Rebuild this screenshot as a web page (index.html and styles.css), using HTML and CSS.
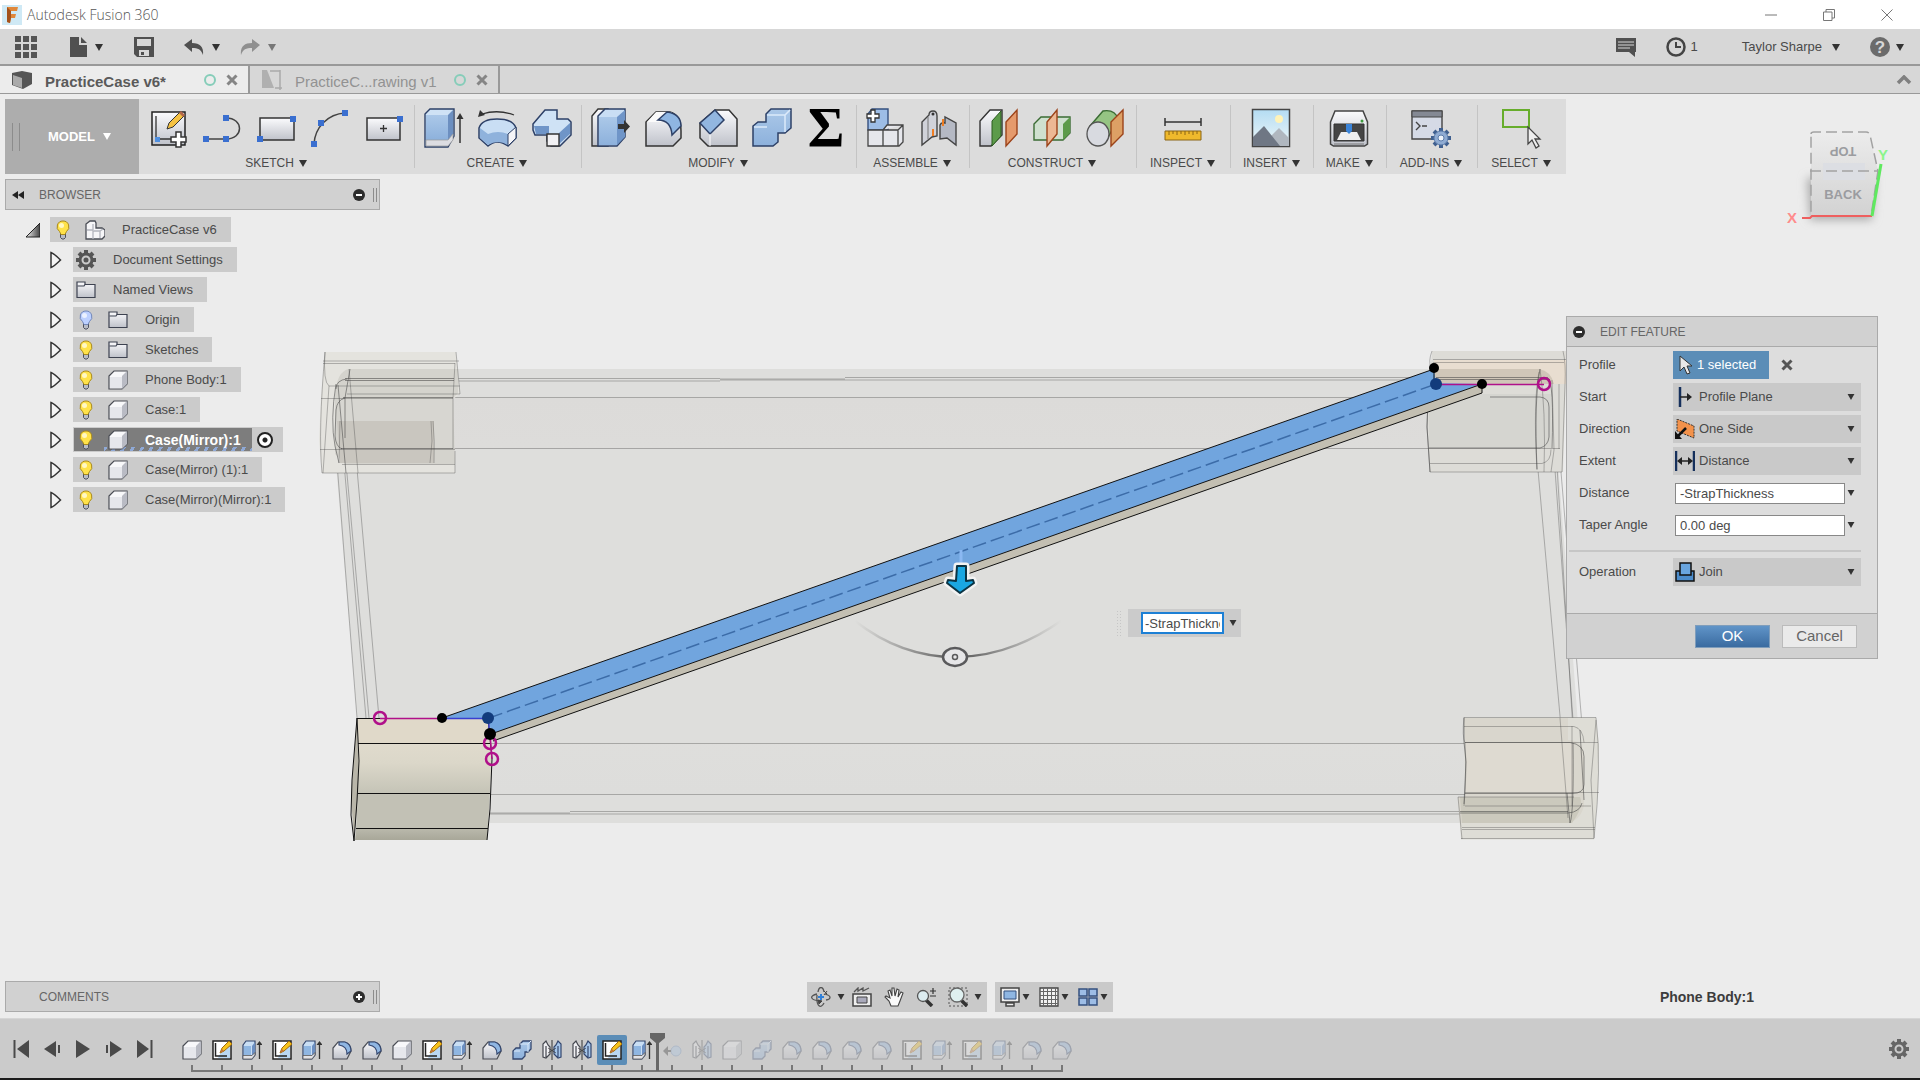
FILE: index.html
```html
<!DOCTYPE html>
<html lang="en">
<head>
    <meta charset="UTF-8">
    <meta name="viewport" content="width=device-width, initial-scale=1.0">
    <title>Autodesk Fusion 360</title>
    <link rel="stylesheet" href="styles.css">
</head>
<body>
    <!-- Shared icons -->
    <svg class="defs" width="0" height="0" aria-hidden="true">
        <defs>
            <linearGradient id="blue" x1="0" y1="0" x2="0" y2="1"><stop offset="0" stop-color="#abc8e8"/><stop offset="1" stop-color="#8db1dc"/></linearGradient>
            <linearGradient id="grey" x1="0" y1="0" x2="0" y2="1"><stop offset="0" stop-color="#fbfbfd"/><stop offset="1" stop-color="#bfc2ca"/></linearGradient>
            <linearGradient id="sky" x1="0" y1="0" x2="0" y2="1"><stop offset="0" stop-color="#b4dcf3"/><stop offset="1" stop-color="#eef7f8"/></linearGradient>
            <linearGradient id="dark" x1="0" y1="0" x2="1" y2="0"><stop offset="0" stop-color="#eee"/><stop offset="1" stop-color="#444"/></linearGradient>
        </defs>

        <symbol id="caret" viewBox="0 0 8 7"><path d="M0 0h8L4 7z" fill="currentColor"/></symbol>
        <symbol id="cross" viewBox="0 0 12 12"><path d="M1.500 1.500l9 9M10.500 1.500l-9 9" stroke="currentColor" stroke-width="3"/></symbol>
        <symbol id="minus" viewBox="0 0 12 12"><circle cx="6" cy="6" r="6" fill="#2d2d2d"/><path d="M3 6h6" stroke="#fff" stroke-width="2"/></symbol>
        <symbol id="plus" viewBox="0 0 12 12"><circle cx="6" cy="6" r="6" fill="#2d2d2d"/><path d="M3 6h6M6 3v6" stroke="#fff" stroke-width="2"/></symbol>
        <symbol id="gear" viewBox="0 0 20 20">
            <circle cx="10" cy="10" r="6" fill="none" stroke="currentColor" stroke-width="3"/>
            <circle cx="10" cy="10" r="2.500" fill="currentColor"/>
            <path d="M10 0v4M10 16v4M0 10h4M16 10h4M3 3l3 3M14 14l3 3M17 3l-3 3M6 14l-3 3" stroke="currentColor" stroke-width="4"/>
        </symbol>
        <symbol id="expand" viewBox="0 0 14 18"><path d="M2 1.500c3 1 7 5 9.500 7.500C9 11.500 5 15.500 2 16.500z" fill="#f4f4f4" stroke="#333" stroke-width="1.500"/></symbol>

        <symbol id="bulb" viewBox="0 0 20 20">
            <path d="M7.500 13h5v4.500l-1.500 1.500h-2L7.500 17.500z" fill="#b8bcc6" stroke="#4b4f5c"/>
            <path d="M10 1a5.800 5.800 0 0 0-3.500 10.500l1.500 3h4l1.500-3A5.800 5.800 0 0 0 10 1z" fill="#ffe24a" stroke="#a88a1e"/>
            <circle cx="8.500" cy="5.500" r="2.500" fill="#fff8c4"/>
        </symbol>
        <symbol id="bulb-off" viewBox="0 0 20 20">
            <path d="M7.500 13h5v4.500l-1.500 1.500h-2L7.500 17.500z" fill="#b8bcc6" stroke="#4b4f5c"/>
            <path d="M10 1a5.800 5.800 0 0 0-3.500 10.500l1.500 3h4l1.500-3A5.800 5.800 0 0 0 10 1z" fill="#bcd0ff" stroke="#7287b8"/>
            <circle cx="8.500" cy="5.500" r="2.500" fill="#eaf1ff"/>
        </symbol>
        <symbol id="folder" viewBox="0 0 20 20">
            <path d="M1 17.500V2h8v2.500h10v13z" fill="url(#grey)" stroke="#3d4250" stroke-width="1.200"/>
            <path d="M1.500 6H8l1-1.500" fill="none" stroke="#3d4250" stroke-width="1.200"/>
        </symbol>
        <symbol id="box" viewBox="0 0 20 20">
            <path d="M1 6l5-5h13v13l-5 5H1z" fill="#f8f8fa" stroke="#4a4d55" stroke-width="1.200"/>
            <path d="M14 6l5-5v13l-5 5z" fill="#b9bbc4"/>
            <path d="M2 7h12v11H2z" fill="#e6e7ec"/>
        </symbol>
        <symbol id="component" viewBox="0 0 20 20">
            <path d="M1 19V4l4-3h5l1 2v5h6l3 2v6l-3 3z" fill="#f6f6f8" stroke="#4a4d55" stroke-width="1.300"/>
            <path d="M8 4v6M8 19v-8h7l3-2M15 11v7M2 10h6" fill="none" stroke="#b3b5bd" stroke-width="1.300"/>
        </symbol>

        <symbol id="t-sketch" viewBox="0 0 20 20">
            <path d="M1 1h18v18H1z" fill="#fff" stroke="#222" stroke-width="1.500"/>
            <path d="M10 10l8-6v14H6z" fill="#b9d6f2"/>
            <path d="M3.500 3v13H15" fill="none" stroke="#222" stroke-width="1.500"/>
            <path d="M8 13l2-5 7-7 3 3-8 7z" fill="#f6c21b" stroke="#a06b0a"/>
            <path d="M8 13l2-4 2 2z" fill="#c2703c"/>
        </symbol>
        <symbol id="t-extrude" viewBox="0 0 20 20">
            <path d="M1 5l3-4h9v14l-3 4H1z" fill="#c9def4" stroke="#33466e" stroke-width="1.200"/>
            <path d="M2 6h7v9H2z" fill="#8fb6e2"/><path d="M10 6l3-4v13l-3 4z" fill="#6b8fc2"/>
            <path d="M1 15.500h9l3-3V15l-3 4H1z" fill="#e2e2e6" stroke="#555" stroke-width=".8"/>
            <path d="M17.500 19V4" stroke="#333" stroke-width="1.300"/><path d="M14.500 5l3-4 3 4z" fill="#333"/>
        </symbol>
        <symbol id="t-fillet" viewBox="0 0 20 20">
            <path d="M1 19V8l5-6h6q7 1 7 9l-4 8z" fill="url(#grey)" stroke="#4a4d55" stroke-width="1.200"/>
            <path d="M7 2h6q6 2 6 9l-4 3q0-8-8-9z" fill="#8fb6e2" stroke="#33466e" stroke-width="1.200"/>
        </symbol>
        <symbol id="t-combine" viewBox="0 0 20 20">
            <path d="M1 19v-8l3-3h4V4l3-3h8v8l-3 3h-3v4l-3 3z" fill="url(#blue)" stroke="#33466e" stroke-width="1.300"/>
            <path d="M8 4h8l3-3M16 4v8M2 11h6" fill="none" stroke="#dceafa"/>
        </symbol>
        <symbol id="t-mirror" viewBox="0 0 20 20">
            <path d="M1 17V4l3-3 2 4 2 2v7l-4 4zM4 6v11" fill="#f0f0f3" stroke="#44474f" stroke-width="1.200"/>
            <path d="M19 17V4l-3-3-2 4-2 2v7l4 4zM16 6v11" fill="#a5c6ea" stroke="#33466e" stroke-width="1.200"/>
            <path d="M10 0v20" stroke="#333"/><path d="M6 8l8 5M14 8l-8 5" stroke="#333" stroke-width=".7"/>
        </symbol>
        <symbol id="t-move" viewBox="0 0 20 20">
            <circle cx="14" cy="11" r="5" fill="#a5c6ea" stroke="#6e8fbd"/><path d="M9 11H4" stroke="#222" stroke-width="2"/><path d="M6 6L1 11l5 5z" fill="#222"/>
        </symbol>
    </svg>

    <header>
        <div class="titlebar">
            <svg class="app-logo" viewBox="0 0 20 20"><path d="M0 0h20v20H0z" fill="#cfe9f5"/><path d="M5 2h11l-1 4H9v3h5l-1 4H9l-1 5-3-1z" fill="#e0873a"/><path d="M5 2l4 4v7l-1 5-3-1z" fill="#a4521c"/></svg>
            <span class="app-name">Autodesk Fusion 360</span>
            <button class="window-btn" aria-label="Minimize"><svg viewBox="0 0 12 12"><path d="M0 6h12" /></svg></button>
            <button class="window-btn" aria-label="Restore"><svg viewBox="0 0 12 12"><path d="M.5 3h8.500v8.500H.5zM3 3V.5h8.500V9H9"/></svg></button>
            <button class="window-btn" aria-label="Close"><svg viewBox="0 0 12 12"><path d="M.5.5l11 11M11.500.5l-11 11"/></svg></button>
        </div>

        <div class="appbar">
            <button class="app-btn" aria-label="Data panel"><svg class="i22" viewBox="0 0 22 22"><path d="M0 0h6v6H0zM8 0h6v6H8zM16 0h6v6h-6zM0 8h6v6H0zM8 8h6v6H8zM16 8h6v6h-6zM0 16h6v6H0zM8 16h6v6H8zM16 16h6v6h-6z" fill="#555"/></svg></button>
            <button class="app-btn file" aria-label="File"><svg class="doc" viewBox="0 0 17 20"><path d="M0 0h9v8h8v12H0zM11 0l6 6h-6z" fill="#505050"/></svg><svg class="caret"><use href="#caret"/></svg></button>
            <button class="app-btn save" aria-label="Save"><svg class="i20" viewBox="0 0 20 20"><path d="M0 0h20v20H3l-3-3z" fill="#505050"/><path d="M3 2h14v7H3zM5 13h10v6H5z" fill="#d7d7d7"/><path d="M7 15h3v3H7z" fill="#505050"/></svg></button>
            <button class="app-btn undo" aria-label="Undo"><svg class="i20" viewBox="0 0 20 16"><path d="M0 6l8-6v4c8 0 12 4 11 12-2-6-5-7-11-7v4z" fill="#505050"/></svg><svg class="caret"><use href="#caret"/></svg></button>
            <button class="app-btn redo" aria-label="Redo"><svg class="i20" viewBox="0 0 20 16"><path d="M20 6l-8-6v4C4 4 0 8 1 16c2-6 5-7 11-7v4z" fill="#8f8f8f"/></svg><svg class="caret"><use href="#caret"/></svg></button>
            <div class="account">
                <button class="app-btn" aria-label="Comments"><svg class="i20" viewBox="0 0 20 20"><path d="M0 1h20v14h-1v5l-6-5H0z" fill="#505050"/><path d="M2 5h16M2 8h16M2 11h12" stroke="#d7d7d7"/></svg></button>
                <button class="app-btn jobs"><svg class="i20" viewBox="0 0 20 20"><circle cx="10" cy="10" r="8.500" fill="none" stroke="#444" stroke-width="2.500"/><path d="M10 5v5h5" fill="none" stroke="#444" stroke-width="2"/></svg>1</button>
                <button class="app-btn user">Taylor Sharpe<svg class="caret"><use href="#caret"/></svg></button>
                <button class="app-btn help" aria-label="Help"><svg class="i20" viewBox="0 0 20 20"><circle cx="10" cy="10" r="10" fill="#6b6b6b"/><text x="10" y="16" text-anchor="middle" class="help-mark">?</text></svg><svg class="caret"><use href="#caret"/></svg></button>
            </div>
        </div>

        <nav class="tabs">
            <div class="tab active">
                <svg class="i20" viewBox="0 0 20 20"><path d="M0 3l10-2 10 2v11l-9 5-11-4z" fill="#555"/><path d="M1 5l9 3v10l-9-3z" fill="#aaa"/></svg>
                <a href="#">PracticeCase v6*</a>
                <span class="status"></span>
                <button class="close" aria-label="Close PracticeCase"><svg><use href="#cross"/></svg></button>
            </div>
            <div class="tab">
                <svg class="i20" viewBox="0 0 20 20"><path d="M0 0h5l7 18H0z" fill="#b0b0b0"/><path d="M8 1h10M18 0v20M13 18h7" fill="none" stroke="#aaa" stroke-width="1.500"/></svg>
                <a href="#">PracticeC...rawing v1</a>
                <span class="status"></span>
                <button class="close" aria-label="Close drawing"><svg><use href="#cross"/></svg></button>
            </div>
            <button class="collapse" aria-label="Collapse"><svg viewBox="0 0 16 10"><path d="M2 8l6-6 6 6" fill="none" stroke="#808080" stroke-width="3.500"/></svg></button>
        </nav>
    </header>

    <main class="workspace">
        <!-- 3D model -->
        <svg class="scene" viewBox="0 94 1920 924" preserveAspectRatio="xMidYMid slice" aria-label="Model view">
            <defs>
                <linearGradient id="clamp" x1="0" y1="0" x2="0" y2="1"><stop offset="0" stop-color="#e0dbcd"/><stop offset=".4" stop-color="#dbd7c9"/><stop offset="1" stop-color="#c5c4b7"/></linearGradient>
                <linearGradient id="clamp-end" x1="0" y1="0" x2="0" y2="1"><stop offset="0" stop-color="#bbbaad"/><stop offset="1" stop-color="#a8a799"/></linearGradient>
                <linearGradient id="fade" x1="0" y1="0" x2="1" y2="0"><stop offset="0" stop-color="#666" stop-opacity="0"/><stop offset=".5" stop-color="#555"/><stop offset="1" stop-color="#666" stop-opacity="0"/></linearGradient>
                <linearGradient id="rail" x1="0" y1="0" x2="0" y2="1"><stop offset="0" stop-color="#dcdbd9"/><stop offset=".6" stop-color="#e1e0de"/><stop offset="1" stop-color="#dddddb"/></linearGradient>
            </defs>
            <!-- phone body -->
            <path d="M346 369H1540q10 2 12 14l32 420q-2 18-12 20H490V718H357L334 440V392q3-20 12-23z" fill="#dededc"/>
            <path d="M340 398H1550v51H340zM490 743H1588v51H490z" fill="url(#rail)"/>
            <g class="edge">
                <path d="M348 378.500H720M348 381H720M720 379H845M845 377.500H1430M720 380H1430M343 397.500H1550M340 448.500H1550M490 743.500H1598M490 794.500H1470M490 813H570M570 811.500H1570M490 814H1570"/>
                <path d="M337 463l20 255M344 463l22 255M346 463l23 255M349 369l8 100 22 249M337 463q-4-40-2-70M1538 470l29 324 3 28M1550 400l23 320M1553 400l23 380M1561 472l22 265 2 60"/>
            </g>
            <!-- top left clamp -->
            <path d="M325 352h131l4 42-7 5 2 74H322l-3-33 2-42z" fill="#e4e3de"/>
            <path d="M349 369h109v24l-5 5 2 66H346l-11-10V395q2-24 14-26z" fill="#cfcec8" opacity=".8"/>
            <path d="M340 398h113v51H340z" fill="#d7d6d1"/>
            <path d="M337 421h97v42H340z" fill="#c9c6bf"/>
            <g class="edge">
                <path d="M325 352q-7 80-3 121h133v-22M325 352q-2 30 4 34l-6 87M456 352l4 42M323 361h136M323 363.500h132M329 386h131M321 398.500h132M320 449.500h135M342 464.500h113M455 363l-2 35v51M347 394h113M431 421l1 20-2 22M433 421q2 20 1 42M340 421l-1 42M349 369l9 104"/>
            </g>
            <g class="edge strong">
                <path d="M345 378.500h109M345 380.500h109M343 397.500h110M341 448.500h112M350 369l-5 29v40M336 384q-6 36-1 62l4 17M347 379q-11 1-11 10M345 398q-8 2-9 12l-1 26q1 11 7 13M338 385l8 88"/>
            </g>
            <!-- top right clamp -->
            <path d="M1432 351h134v28l-3 93h-133l-3-62z" fill="#dddcd7"/>
            <path d="M1434 360h132v24H1436z" fill="#e8ddd0"/>
            <path d="M1434 369h105q12 2 15 15H1436z" fill="#d0c6b8"/>
            <path d="M1429 394h122v54H1429z" fill="#d5d5d0"/>
            <g class="edge">
                <path d="M1432 351q-4 10-1 18M1563 351q3 12 2 33l-3 88M1433 359.500h133M1433 362.500h131M1428 397l-1 30 3 45h132M1429 448.500h131M1430 463.500h112q9-2 9-14M1559 384v65M1540 369q6 40 4 103M1539 372q-6 30-2 98M1552 380l2 70-3 22"/>
            </g>
            <g class="edge strong"><path d="M1436 377.500h112M1436 379.500h114M1490 397h50q9 1 9 10v30q-1 9-9 11H1429M1548 378q6 4 4 70M1428 398l-1 29 3 45M1540 369q-6 30-3 100"/></g>
            <!-- bottom right clamp -->
            <path d="M1464 717.500h132l3 28-1 48-4 46H1461l-3-42h7z" fill="#deddd6"/>
            <path d="M1464 718h104v22q15 0 16 15v50q-3 16-18 18h-106l-2-26h7l1-40z" fill="#d9d6cd"/>
            <path d="M1466 742h107v50h-107z" fill="#dedad1"/>
            <path d="M1460 797h120q4 10-8 26h-110z" fill="#cbc9bd"/>
            <g class="edge">
                <path d="M1464 717.500h132q6 50-2 121H1461M1464 717q-2 20 1 26 2 30-1 63M1464 726.500h110q9 2 10 16M1465 742.500h133M1465 792.500h134M1458 797h116M1458 797l4 42M1465 806h126M1462 827.500h133M1462 829.500h133M1596 720l-5 60 3 58M1572 726v80M1560 718l8 100"/>
            </g>
            <g class="edge strong"><path d="M1465 742.500h105q14 2 14 14v28q0 9-12 9h-107M1460 811.500h108M1460 813h108q12-1 14-10M1567 793l3 30q4-10 3-80M1580 730l4 70M1464 718v24l2 20-2 42"/></g>

            <!-- active clamp -->
            <path d="M357 718l-6 78 3 45 5-55z" fill="#b9b6a9"/>
            <path d="M357 718h131l2 25H358z" fill="#e0d9c9"/>
            <path d="M358 743h133v20l-1 30H358z" fill="url(#clamp)"/>
            <path d="M358 793h132l-2 35H356z" fill="#c2c1b5"/>
            <path d="M356 828h132l-1 12H355z" fill="url(#clamp-end)"/>
            <path class="line" d="M357 718.500h131M358 743.500h132M358 793.500h132M356 828.500h132M357 718l-5 62-1 35 3 26 3-40 2-40-2-43M488 718l4 41-2 50-3 31"/>

            <!-- strap -->
            <path d="M491 734L1482 384v9L493 741z" fill="#c3bfb2"/>
            <path d="M442 718L1434 369l2 14 46 1L491 734l-2-16z" fill="#71a5de"/>
            <path class="line" d="M442 718L1434 369v15M491 734L1482 384v9L493 741"/>
            <path d="M489 718L1436 384" stroke="#3c6ca8" stroke-width="1.500" stroke-dasharray="14 5"/>
            <path d="M961 550v16" stroke="#8bb8f2" stroke-width="3"/>
            <path d="M380 718.500h62M1436 384.500h108M490 734l2 25" stroke="#b0108a" stroke-width="1.500"/>
            <path d="M442 718.500h47v16" fill="none" stroke="#3a3fd0" stroke-width="1.500"/>
            <g fill="none" stroke="#b0108a" stroke-width="2.500"><circle cx="380" cy="718" r="6"/><circle cx="490" cy="743" r="6"/><circle cx="492" cy="759" r="6"/><circle cx="1544" cy="384" r="6"/></g>
            <circle cx="442" cy="718" r="5"/><circle cx="490" cy="734" r="6"/><circle cx="1434" cy="368" r="5"/><circle cx="1482" cy="384" r="5"/>
            <g fill="#123b7c"><circle cx="488" cy="718" r="6"/><circle cx="1436" cy="384" r="6"/></g>

            <!-- manipulator -->
            <path d="M855 621q46 36 100 36t106-36" fill="none" stroke="url(#fade)" stroke-width="2.500"/>
            <ellipse cx="955" cy="657" rx="12" ry="9" fill="#e6e6e8" stroke="#5a5a5c" stroke-width="2.500"/>
            <circle cx="955" cy="657" r="2.500" fill="none" stroke="#5a5a5c" stroke-width="1.500"/>
            <path d="M957 566h9v15l7-1 1 3-14 10-13-10 1-3 8 1z" fill="#1aa7e2" stroke="#f2f2f2" stroke-width="7" stroke-linejoin="round"/>
            <path d="M957 566h9v15l7-1 1 3-14 10-13-10 1-3 8 1z" fill="#1aa7e2" stroke="#0b3444" stroke-width="2" stroke-linejoin="round"/>
        </svg>

        <!-- View cube -->
        <svg class="viewcube" viewBox="1780 120 110 110" aria-label="View cube">
            <defs>
                <filter id="soft" x="-50%" y="-50%" width="200%" height="200%"><feGaussianBlur stdDeviation="5"/></filter>
                <linearGradient id="cube" x1="0" y1="0" x2="0" y2="1"><stop offset="0" stop-color="#ececec"/><stop offset="1" stop-color="#d2d2d2"/></linearGradient>
            </defs>
            <path d="M1807 178h68l-3 42h-62z" fill="#aaa" filter="url(#soft)"/>
            <path d="M1811 132h58l9 39-7 45h-60z" fill="url(#cube)"/>
            <path d="M1823 163h42v17h-42z" fill="#dcdee3"/>
            <path d="M1811 134q0-2 3-2h52q3 0 4 3l8 36-7 45h-60zM1810 171h68" fill="none" stroke="#a2a2a2" stroke-width="1.500" stroke-dasharray="11 5"/>
            <path d="M1802 218h8l2-2h60" fill="none" stroke="#ee5f5f" stroke-width="2"/>
            <path d="M1872 216l9-52" stroke="#5fe95f" stroke-width="3"/>
            <text x="1843" y="199" class="face">BACK</text>
            <text x="1843" y="155" class="face top" transform="rotate(180 1843 151)">TOP</text>
            <text x="1792" y="223" class="axis x">X</text>
            <text x="1883" y="160" class="axis y">Y</text>
        </svg>

        <div class="ribbon">
            <button class="mode">MODEL<svg class="caret"><use href="#caret"/></svg></button>
            <section class="group">
                <div class="tools">
                    <button aria-label="Create sketch"><svg viewBox="0 0 40 40"><path d="M4 4h33v33H4z" fill="url(#grey)" stroke="#222" stroke-width="1.500"/><path d="M8 8v23h23" fill="none" stroke="#333" stroke-width="1.300"/><path d="M7 29h5v5H7z" fill="#4f8fe0"/><path d="M19 21l2-6L32 4l4 4-11 11z" fill="#f5c242" stroke="#333"/><path d="M31 5l2-2 4 4-2 2z" fill="#b4684a"/><path d="M28 24h5v5h5v5h-5v5h-5v-5h-5v-5h5z" fill="#fff" stroke="#333" stroke-width="1.500"/></svg></button>
                    <button aria-label="Line"><svg viewBox="0 0 40 40"><path d="M4 31h20c18 0 18-21 0-21" fill="none" stroke="#444" stroke-width="1.500"/><path d="M1 28h6v6H1zM21 28h6v6h-6zM21 7h6v6h-6z" fill="#3a6fd0"/></svg></button>
                    <button aria-label="Rectangle"><svg viewBox="0 0 40 40"><path d="M4 10h34v22H4z" fill="url(#grey)" stroke="#333" stroke-width="1.500"/><path d="M1 28h6v6H1zM34 8h6v6h-6z" fill="#3a6fd0"/></svg></button>
                    <button aria-label="Arc"><svg viewBox="0 0 40 40"><path d="M4 36C5 19 18 6 35 5" fill="none" stroke="#444" stroke-width="1.500"/><path d="M1 33h6v6H1zM8 12h6v6H8zM32 2h6v6h-6z" fill="#3a6fd0"/></svg></button>
                    <button aria-label="Center rectangle"><svg viewBox="0 0 40 40"><path d="M3 10h33v22H3z" fill="url(#grey)" stroke="#333" stroke-width="1.500"/><path d="M19.500 17v7M16 20.500h7" stroke="#333" stroke-width="1.300"/><path d="M33 8h6v6h-6z" fill="#3a6fd0"/></svg></button>
                </div>
                <button class="label">SKETCH<svg class="caret"><use href="#caret"/></svg></button>
            </section>
            <section class="group">
                <div class="tools">
                    <button aria-label="Extrude"><svg viewBox="0 0 40 40"><path d="M2 6l5-5h24v27l-6 11H2z" fill="#cfe2f5" stroke="#2d4067" stroke-width="1.400"/><path d="M3 7h22v25H3z" fill="url(#blue)"/><path d="M25 7l5-5v24l-5 7z" fill="#6c8fc0"/><path d="M3 32h22l5-6v6l-5 6H3z" fill="#dcdde2" stroke="#999" stroke-width=".7"/><path d="M37 35V8" stroke="#333" stroke-width="1.500"/><path d="M33.500 11L37 5l3.500 6z" fill="#333"/></svg></button>
                    <button aria-label="Revolve"><svg viewBox="0 0 40 40"><path d="M2 20q3-9 18-9 16 0 19 9v10l-8 8q-11-8-20 0l-9-8z" fill="#c9def4" stroke="#2d4067" stroke-width="1.500"/><path d="M3 20l8 6q10-4 20 0v11q-10-6-20 0l-8-7z" fill="#8fb2dc"/><path d="M31 26l8-7v11l-8 8z" fill="#f5f5f8" stroke="#2d4067"/><path d="M5 6q16-5 32 1" fill="none" stroke="#333" stroke-width="1.300"/><path d="M1 9l2-7 5 5z" fill="#333"/></svg></button>
                    <button aria-label="Sweep"><svg viewBox="0 0 40 40"><path d="M2 16L14 2h12v9h11l3 3v13L29 38h-9l-4-5v-6H4l-2-5z" fill="#cfe2f5" stroke="#2d4067" stroke-width="1.500"/><path d="M3 18h15v8H5zM28 25l11-10v11L28 36z" fill="#6f95c8"/><path d="M16 26h12v12H16z" fill="#f1f1f4" stroke="#333" stroke-width="1.400"/></svg></button>
                </div>
                <button class="label">CREATE<svg class="caret"><use href="#caret"/></svg></button>
            </section>
            <section class="group">
                <div class="tools">
                    <button aria-label="Press pull"><svg viewBox="0 0 40 40"><path d="M2 38V8l6-7h10v37z" fill="url(#grey)" stroke="#333" stroke-width="1.400"/><path d="M8 38V8l7-7h20v28l-8 9z" fill="#c9def4" stroke="#2d4067" stroke-width="1.500"/><path d="M9 9h18v28H9z" fill="url(#blue)"/><path d="M27 9l8-7v27l-8 8z" fill="#6f95c8"/><path d="M28 16h6v-4l6 6.500-6 6.500v-4h-6z" fill="#333"/></svg></button>
                    <button aria-label="Fillet"><svg viewBox="0 0 40 40"><path d="M2 38V14L12 4h14q11 3 11 19v7l-8 8z" fill="url(#grey)" stroke="#333" stroke-width="1.500"/><path d="M3 14h15L28 4H12z" fill="#fbfbfb"/><path d="M14 12l9-8q14 2 14 14l-9 9q-1-15-14-15z" fill="#8fb6e2" stroke="#2d4067" stroke-width="1.500"/></svg></button>
                    <button aria-label="Chamfer"><svg viewBox="0 0 40 40"><path d="M2 15L17 2h14l8 9v27H10l-8-8z" fill="url(#grey)" stroke="#333" stroke-width="1.500"/><path d="M17 2l9 10-14 14-10-11z" fill="#92b6e0" stroke="#2d4067" stroke-width="1.500"/><path d="M12 26v12" stroke="#fff"/></svg></button>
                    <button aria-label="Combine"><svg viewBox="0 0 40 40"><path d="M1 38V18l5-4h8V6l5-5h20v19l-6 5h-7v9l-5 4z" fill="url(#blue)" stroke="#2d4067" stroke-width="1.500"/><path d="M15 7h18l5-5M33 7v17M2 19h13" fill="none" stroke="#dceafa" stroke-width="1.500"/></svg></button>
                    <button aria-label="Change parameters"><svg viewBox="0 0 40 40"><text x="20" y="39" text-anchor="middle" class="sigma">&Sigma;</text></svg></button>
                </div>
                <button class="label">MODIFY<svg class="caret"><use href="#caret"/></svg></button>
            </section>
            <section class="group">
                <div class="tools">
                    <button aria-label="New component"><svg viewBox="0 0 40 40"><path d="M3 6l4-5h16v21H3z" fill="#9dbde6" stroke="#35507f" stroke-width="1.400"/><path d="M3 22h15l4-5h16v17l-4 4H3zM18 22v16M18 22h15l5-5M33 22v16" fill="#e6e7ec" stroke="#444" stroke-width="1.300"/><path d="M6 2h4v4h4v4h-4v4H6v-4H2V6h4z" fill="#fff" stroke="#333" stroke-width="1.300"/></svg></button>
                    <button aria-label="Joint"><svg viewBox="0 0 40 40"><path d="M3 37V14l7-7q0-4 4-4t4 5v20l-5 1z" fill="#d0d2d9" stroke="#444" stroke-width="1.400"/><path d="M9 9v22" stroke="#777"/><path d="M21 31V17q1-3 5-2V9l11 6v22l-9-7z" fill="#b5b9c4" stroke="#444" stroke-width="1.400"/><circle cx="14" cy="6" r="1.500" fill="#333"/><path d="M14 21v7M24 11v7" stroke="#ef7d22" stroke-width="2"/></svg></button>
                </div>
                <button class="label">ASSEMBLE<svg class="caret"><use href="#caret"/></svg></button>
            </section>
            <section class="group">
                <div class="tools">
                    <button aria-label="Offset plane"><svg viewBox="0 0 40 40"><path d="M2 38V13L12 2h12v25L13 38z" fill="url(#grey)" stroke="#333" stroke-width="1.400"/><path d="M14 38V13L23 3v25z" fill="#5c9b4a" stroke="#2c5c20"/><path d="M28 38V14L39 2v24z" fill="#e59a6c" stroke="#9c431a" stroke-width="1.400"/></svg></button>
                    <button aria-label="Midplane"><svg viewBox="0 0 40 40"><path d="M2 32V16l7-7h29v16l-7 7z" fill="#cfe0cf" stroke="#3a6b33" stroke-width="1.400"/><path d="M31 32V16l7-7v16z" fill="#5c9b4a"/><path d="M15 38V14L25 2v24z" fill="#ecb894" stroke="#9c431a" stroke-width="1.400"/></svg></button>
                    <button aria-label="Plane through cylinder"><svg viewBox="0 0 40 40"><path d="M4 18L17 3q12-2 15 8L19 35z" fill="#95c483" stroke="#3a6b33" stroke-width="1.400"/><ellipse cx="12" cy="26" rx="11" ry="12" fill="#d8dae0" stroke="#555" stroke-width="1.300"/><path d="M25 38V14L37 2v24z" fill="#dda065" stroke="#9c431a" stroke-width="1.400"/></svg></button>
                </div>
                <button class="label">CONSTRUCT<svg class="caret"><use href="#caret"/></svg></button>
            </section>
            <section class="group">
                <div class="tools"><button aria-label="Measure"><svg viewBox="0 0 40 40"><path d="M2 10v8M38 10v8M2 14h36" stroke="#333" stroke-width="1.500"/><path d="M2 23h36v9H2z" fill="#efb92c" stroke="#8a6414"/><path d="M6 23v4M10 23v3M14 23v4M18 23v3M22 23v4M26 23v3M30 23v4M34 23v3" stroke="#8a6414"/></svg></button></div>
                <button class="label">INSPECT<svg class="caret"><use href="#caret"/></svg></button>
            </section>
            <section class="group narrow">
                <div class="tools"><button aria-label="Insert image"><svg viewBox="0 0 40 40"><path d="M1.500 1.500h37v37h-37z" fill="url(#sky)" stroke="#444" stroke-width="1.500"/><circle cx="28" cy="11" r="4" fill="#fff3b8"/><path d="M18 30l10-10 10 10v8H18z" fill="#b0b7bf"/><path d="M2 29l11-11 16 20H2z" fill="#6f7784"/></svg></button></div>
                <button class="label">INSERT<svg class="caret"><use href="#caret"/></svg></button>
            </section>
            <section class="group narrow">
                <div class="tools"><button aria-label="3D print"><svg viewBox="0 0 40 40"><path d="M1.500 14L6 3h28l4.500 11v22l-3 2h-31l-3-2z" fill="url(#grey)" stroke="#444" stroke-width="1.500"/><path d="M5 16h30v17H5z" fill="#444" stroke="#333"/><path d="M8 32l4-8h16l4 8z" fill="#eee"/><path d="M17 16h6v7l-3 3-3-3z" fill="#3a83d8"/><path d="M5 36h30" stroke="#777"/><circle cx="33" cy="13" r="1.500" fill="#3c9b3c"/></svg></button></div>
                <button class="label">MAKE<svg class="caret"><use href="#caret"/></svg></button>
            </section>
            <section class="group">
                <div class="tools"><button aria-label="Scripts and add-ins"><svg viewBox="0 0 40 40"><path d="M1 3h30v28H1z" fill="#d5dae6" stroke="#444" stroke-width="1.400"/><path d="M1 3h30v6H1z" fill="#848994" stroke="#444"/><path d="M5 14l4 4-4 4M11 18h5" fill="none" stroke="#444" stroke-width="1.400"/><path d="M30 20v20M20 30h20M23 23l14 14M37 23L23 37" stroke="#3f5f8f" stroke-width="4"/><circle cx="30" cy="30" r="7" fill="#8fabd2" stroke="#5d7dab"/><circle cx="30" cy="30" r="3" fill="#eef3fa" stroke="#5d7dab"/></svg></button></div>
                <button class="label">ADD-INS<svg class="caret"><use href="#caret"/></svg></button>
            </section>
            <section class="group">
                <div class="tools"><button aria-label="Select"><svg viewBox="0 0 40 40"><path d="M2 2h26v17H2z" fill="none" stroke="#67ad2c" stroke-width="2"/><path d="M27 19v17l4-4 4 8 3-2-4-7h5z" fill="#eee" stroke="#444" stroke-width="1.300"/></svg></button></div>
                <button class="label">SELECT<svg class="caret"><use href="#caret"/></svg></button>
            </section>
        </div>

        <div class="middle">
            <section class="browser">
                <div class="panel">
                    <svg class="rewind" viewBox="0 0 12 8"><path d="M6 0v8L0 4zM12 0v8L6 4z" fill="#222"/></svg>
                    <h2>BROWSER</h2>
                    <button aria-label="Collapse browser"><svg class="i12"><use href="#minus"/></svg></button>
                    <span class="grip"></span>
                </div>
                <ul class="tree">
                    <li class="root"><button class="toggle" aria-label="Collapse"><svg viewBox="0 0 14 14"><path d="M14 0v14H0z" fill="url(#dark)" stroke="#222"/></svg></button><span class="chip"><svg><use href="#bulb"/></svg><svg><use href="#component"/></svg>PracticeCase v6</span></li>
                    <li><button class="toggle" aria-label="Expand"><svg><use href="#expand"/></svg></button><span class="chip"><svg class="cog"><use href="#gear"/></svg>Document Settings</span></li>
                    <li><button class="toggle" aria-label="Expand"><svg><use href="#expand"/></svg></button><span class="chip"><svg><use href="#folder"/></svg>Named Views</span></li>
                    <li><button class="toggle" aria-label="Expand"><svg><use href="#expand"/></svg></button><span class="chip"><svg><use href="#bulb-off"/></svg><svg><use href="#folder"/></svg>Origin</span></li>
                    <li><button class="toggle" aria-label="Expand"><svg><use href="#expand"/></svg></button><span class="chip"><svg><use href="#bulb"/></svg><svg><use href="#folder"/></svg>Sketches</span></li>
                    <li><button class="toggle" aria-label="Expand"><svg><use href="#expand"/></svg></button><span class="chip"><svg><use href="#bulb"/></svg><svg><use href="#box"/></svg>Phone Body:1</span></li>
                    <li><button class="toggle" aria-label="Expand"><svg><use href="#expand"/></svg></button><span class="chip"><svg><use href="#bulb"/></svg><svg><use href="#box"/></svg>Case:1</span></li>
                    <li><button class="toggle" aria-label="Expand"><svg><use href="#expand"/></svg></button><span class="chip selected"><svg><use href="#bulb"/></svg><svg><use href="#box"/></svg>Case(Mirror):1</span><label class="activate"><input type="radio" name="component" checked aria-label="Activate Case(Mirror):1"></label></li>
                    <li><button class="toggle" aria-label="Expand"><svg><use href="#expand"/></svg></button><span class="chip"><svg><use href="#bulb"/></svg><svg><use href="#box"/></svg>Case(Mirror) (1):1</span></li>
                    <li><button class="toggle" aria-label="Expand"><svg><use href="#expand"/></svg></button><span class="chip"><svg><use href="#bulb"/></svg><svg><use href="#box"/></svg>Case(Mirror)(Mirror):1</span></li>
                </ul>
            </section>

            <form class="dialog">
                <div class="dialog-head"><svg class="i12"><use href="#minus"/></svg><h2>EDIT FEATURE</h2></div>
                <div class="dialog-body">
                    <div class="row">
                        <label for="profile">Profile</label>
                        <div class="pick">
                            <button type="button" id="profile"><svg viewBox="0 0 14 20"><path d="M1 1v15l4-4 3 7 3-1-3-7h5z" fill="#e8e8e8" stroke="#333"/></svg>1 selected</button>
                            <button type="button" class="clear" aria-label="Clear selection"><svg class="i12"><use href="#cross"/></svg></button>
                        </div>
                    </div>
                    <div class="row">
                        <label for="start">Start</label>
                        <div class="select"><select id="start"><option>Profile Plane</option></select><svg class="glyph" viewBox="0 0 20 20"><path d="M5 0v20" stroke="#16305c" stroke-width="2.500"/><path d="M5 10h9" stroke="#222" stroke-width="1.500"/><path d="M12 6l5 4-5 4z" fill="#222"/></svg><svg class="caret"><use href="#caret"/></svg></div>
                    </div>
                    <div class="row">
                        <label for="direction">Direction</label>
                        <div class="select"><select id="direction"><option>One Side</option></select><svg class="glyph" viewBox="0 0 20 20"><path d="M2 0l17 7v12L2 12z" fill="#f3924b" stroke="#333" stroke-dasharray="2 1"/><path d="M11 9l-9 9" stroke="#111" stroke-width="2.500"/><path d="M0 20v-8l7 8z" fill="#111"/></svg><svg class="caret"><use href="#caret"/></svg></div>
                    </div>
                    <div class="row">
                        <label for="extent">Extent</label>
                        <div class="select"><select id="extent"><option>Distance</option></select><svg class="glyph" viewBox="0 0 20 20"><path d="M1 0v20M19 0v20" stroke="#16305c" stroke-width="2.500"/><path d="M4 10h12" stroke="#222" stroke-width="1.500"/><path d="M7 6l-5 4 5 4zM13 6l5 4-5 4z" fill="#222"/></svg><svg class="caret"><use href="#caret"/></svg></div>
                    </div>
                    <div class="row">
                        <label for="distance">Distance</label>
                        <div class="field"><input id="distance" type="text" value="-StrapThickness"><svg class="caret"><use href="#caret"/></svg></div>
                    </div>
                    <div class="row">
                        <label for="taper">Taper Angle</label>
                        <div class="field"><input id="taper" type="text" value="0.00 deg"><svg class="caret"><use href="#caret"/></svg></div>
                    </div>
                    <hr>
                    <div class="row">
                        <label for="operation">Operation</label>
                        <div class="select"><select id="operation"><option>Join</option></select><svg class="glyph" viewBox="0 0 20 20"><path d="M1 9h18v10H1z" fill="#4c8ccb" stroke="#111" stroke-width="1.500"/><path d="M5 1h11v12H5z" fill="#69a5df" stroke="#111" stroke-width="1.500"/></svg><svg class="caret"><use href="#caret"/></svg></div>
                    </div>
                </div>
                <div class="dialog-foot">
                    <button type="button" class="ok">OK</button>
                    <button type="button" class="cancel">Cancel</button>
                </div>
            </form>
        </div>

        <div class="bottom">
            <div class="panel">
                <h2>COMMENTS</h2>
                <button aria-label="Expand comments"><svg class="i12"><use href="#plus"/></svg></button>
                <span class="grip"></span>
            </div>
            <div class="view-tools">
                <div class="view-group">
                    <button class="orbit" aria-label="Orbit"><svg class="i20" viewBox="0 0 20 20"><g fill="none" stroke="#555" stroke-width="1.300"><path d="M6 7C-2 9-1 13 9 14M14 7c7 2 6 5 1 6"/><path d="M7 5c1-6 5-6 6 0M6 8c-1 12 4 14 7 8"/></g><path d="M7 13l4 1-3 3zM13 4l3 3M16 4l-3 4" fill="#444" stroke="#444"/><path d="M10 7v6M7 10h6" stroke="#2f7fd8" stroke-width="2"/></svg><svg class="caret"><use href="#caret"/></svg></button>
                    <button aria-label="Look at"><svg class="i20" viewBox="0 0 20 20"><path d="M1 7h18v12H1z" fill="#eee" stroke="#444" stroke-width="1.500"/><path d="M5 10h10v6H5z" fill="#aab" stroke="#444"/><path d="M2 5l4-4v3l5-3v3l6-3" fill="none" stroke="#555" stroke-width="1.300"/></svg></button>
                    <button aria-label="Pan"><svg class="i20" viewBox="0 0 20 20"><path d="M7 19l-2-5-4-4 1-1 4 2L4 4l2-1 2 6V1h2l1 8 2-7 2 1-1 7 3-5 2 1-3 8-2 5z" fill="#fafafa" stroke="#444" stroke-width="1.100"/></svg></button>
                    <button aria-label="Zoom"><svg class="i20" viewBox="0 0 20 20"><path d="M10 13l6 6" stroke="#333" stroke-width="3.500"/><circle cx="7" cy="9" r="5.500" fill="#dcecf0" stroke="#555" stroke-width="1.300"/><path d="M17 1v6M14 4h6M14 9h6" stroke="#333" stroke-width="1.200"/></svg></button>
                    <button aria-label="Fit"><svg class="i20" viewBox="0 0 20 20"><path d="M1 1h18v18H1z" fill="none" stroke="#555" stroke-dasharray="2 2"/><path d="M13 13l6 6" stroke="#333" stroke-width="3.500"/><circle cx="9" cy="8" r="7" fill="#dff0f0" stroke="#666" stroke-width="1.300"/></svg><svg class="caret"><use href="#caret"/></svg></button>
                </div>
                <div class="view-group tight">
                    <button aria-label="Display settings"><svg class="i20" viewBox="0 0 20 20"><path d="M1 1h18v14H1zM6 19h8v-3H6z" fill="#eee" stroke="#444" stroke-width="1.500"/><path d="M4 4h12v8H4z" fill="#8fb6e2" stroke="#35507f"/></svg><svg class="caret"><use href="#caret"/></svg></button>
                    <button aria-label="Grid"><svg class="i20" viewBox="0 0 20 20"><path d="M1 1h18v18H1z" fill="#f2f2f2" stroke="#444" stroke-width="1.300"/><path d="M4.500 1v18M8.500 1v18M12.500 1v18M16.500 1v18M1 4.500h18M1 8.500h18M1 12.500h18M1 16.500h18" stroke="#666"/></svg><svg class="caret"><use href="#caret"/></svg></button>
                    <button aria-label="Viewports"><svg class="i20" viewBox="0 0 20 20"><path d="M1 2h8v7H1zM11 2h8v7h-8zM1 11h8v7H1zM11 11h8v7h-8z" fill="#9dbde6" stroke="#35507f" stroke-width="1.500"/></svg><svg class="caret"><use href="#caret"/></svg></button>
                </div>
            </div>
            <p class="hint">Phone Body:1</p>
        </div>

        <!-- Value box next to the manipulator -->
        <div class="value-box">
            <span class="dots"></span>
            <div class="value"><input type="text" value="-StrapThickness" aria-label="Distance" autofocus><svg class="caret"><use href="#caret"/></svg></div>
        </div>
    </main>

    <footer class="timeline">
        <div class="playback">
            <button aria-label="Go to start"><svg viewBox="0 0 16 18"><path d="M1.500 0v18" stroke="#4a4a4a" stroke-width="2"/><path d="M16 0v18L4 9z" fill="#4a4a4a"/></svg></button>
            <button aria-label="Step back"><svg viewBox="0 0 16 18"><path d="M12 1v16L0 9z" fill="#4a4a4a"/><path d="M15 5v8" stroke="#4a4a4a" stroke-width="2"/></svg></button>
            <button aria-label="Play"><svg viewBox="0 0 16 18"><path d="M1 0l14 9-14 9z" fill="#4a4a4a"/></svg></button>
            <button aria-label="Step forward"><svg viewBox="0 0 16 18"><path d="M4 1l12 8-12 8z" fill="#4a4a4a"/><path d="M1 5v8" stroke="#4a4a4a" stroke-width="2"/></svg></button>
            <button aria-label="Go to end"><svg viewBox="0 0 16 18"><path d="M0 0l12 9-12 9z" fill="#4a4a4a"/><path d="M14.500 0v18" stroke="#4a4a4a" stroke-width="2"/></svg></button>
        </div>
        <ol class="features">
            <li><svg><use href="#box"/></svg></li>
            <li><svg><use href="#t-sketch"/></svg></li>
            <li><svg><use href="#t-extrude"/></svg></li>
            <li><svg><use href="#t-sketch"/></svg></li>
            <li><svg><use href="#t-extrude"/></svg></li>
            <li><svg><use href="#t-fillet"/></svg></li>
            <li><svg><use href="#t-fillet"/></svg></li>
            <li><svg><use href="#box"/></svg></li>
            <li><svg><use href="#t-sketch"/></svg></li>
            <li><svg><use href="#t-extrude"/></svg></li>
            <li><svg><use href="#t-fillet"/></svg></li>
            <li><svg><use href="#t-combine"/></svg></li>
            <li><svg><use href="#t-mirror"/></svg></li>
            <li><svg><use href="#t-mirror"/></svg></li>
            <li class="current"><svg><use href="#t-sketch"/></svg></li>
            <li class="last"><svg><use href="#t-extrude"/></svg><svg class="marker" viewBox="0 0 15 38"><path d="M0 0h15v5L9 10v28H6V10L0 5z" fill="#666"/></svg></li>
            <li class="off"><svg><use href="#t-move"/></svg></li>
            <li class="off"><svg><use href="#t-mirror"/></svg></li>
            <li class="off"><svg><use href="#box"/></svg></li>
            <li class="off"><svg><use href="#t-combine"/></svg></li>
            <li class="off"><svg><use href="#t-fillet"/></svg></li>
            <li class="off"><svg><use href="#t-fillet"/></svg></li>
            <li class="off"><svg><use href="#t-fillet"/></svg></li>
            <li class="off"><svg><use href="#t-fillet"/></svg></li>
            <li class="off"><svg><use href="#t-sketch"/></svg></li>
            <li class="off"><svg><use href="#t-extrude"/></svg></li>
            <li class="off"><svg><use href="#t-sketch"/></svg></li>
            <li class="off"><svg><use href="#t-extrude"/></svg></li>
            <li class="off"><svg><use href="#t-fillet"/></svg></li>
            <li class="off"><svg><use href="#t-fillet"/></svg></li>
        </ol>
        <button class="settings" aria-label="Timeline settings"><svg class="i20"><use href="#gear"/></svg></button>
    </footer>
</body>
</html>
```
FILE: styles.css
```css
/* Global Reset */
* {
    margin: 0;
    padding: 0;
    box-sizing: border-box;
}

body {
    font-family: "Liberation Sans", Arial, sans-serif;
    font-size: 13px;
    line-height: 16px;
    color: #4a4a4a;
    background: #ececec;
    display: flex;
    flex-direction: column;
    height: 100vh;
    overflow: hidden;
}

button {
    font: inherit;
    color: inherit;
    background: none;
    border: none;
    display: flex;
    align-items: center;
    cursor: pointer;
}

svg {
    display: block;
    flex-shrink: 0;
}

h2 {
    font-size: 12px;
    font-weight: normal;
    color: #666;
}

.defs {
    position: absolute;
}

.i12 {
    width: 12px;
    height: 12px;
}

.i20 {
    width: 20px;
    height: 20px;
}

.i22 {
    width: 22px;
    height: 22px;
}

.caret {
    width: 8px;
    height: 7px;
    color: #333;
}

/* Title bar */
.titlebar {
    display: flex;
    align-items: center;
    height: 29px;
    padding: 0 4px 0 2px;
    background: #fff;
}

.app-logo {
    width: 20px;
    height: 20px;
}

.app-name {
    flex: 1;
    margin-left: 5px;
    font-family: "Open Sans", "Segoe UI", sans-serif;
    font-size: 14px;
    font-weight: 300;
    color: #555;
}

.window-btn {
    width: 58px;
    height: 28px;
    justify-content: center;
}

.window-btn svg {
    width: 12px;
    height: 12px;
    fill: none;
    stroke: #777;
}

/* App bar */
.appbar {
    display: flex;
    align-items: center;
    height: 37px;
    padding: 1px 16px 0 15px;
    background: #d7d7d7;
    border-bottom: 2px solid #999;
}

.app-btn {
    gap: 8px;
}

.doc {
    width: 17px;
    height: 20px;
}

.file {
    margin-left: 33px;
}

.save {
    margin-left: 31px;
}

.undo {
    margin-left: 30px;
}

.redo {
    margin-left: 20px;
}

.redo .caret {
    color: #777;
}

.account {
    display: flex;
    align-items: center;
    margin-left: auto;
}

.jobs {
    gap: 5px;
    margin-left: 30px;
}

.user {
    gap: 10px;
    margin-left: 44px;
}

.help {
    gap: 6px;
    margin-left: 30px;
}

.help-mark {
    font-size: 17px;
    font-weight: bold;
    fill: #d7d7d7;
}

/* Document tabs */
.tabs {
    display: flex;
    height: 28px;
    background: #d7d7d7;
    border-bottom: 1px solid #999;
}

.tab {
    display: flex;
    align-items: center;
    width: 250px;
    padding: 0 10px 0 12px;
    border-right: 2px solid #999;
    font-size: 15px;
}

.tab.active {
    background: #ececec;
    font-weight: bold;
}

.tab a {
    flex: 1;
    margin-left: 13px;
    padding-top: 4px;
    white-space: nowrap;
    color: #929292;
    text-decoration: none;
}

.tab.active a {
    color: #5a5a5a;
}

.status {
    width: 12px;
    height: 12px;
    border: 2px solid #86cdb9;
    border-radius: 50%;
}

.close {
    margin-left: 10px;
    color: #858585;
}

.close svg {
    width: 12px;
    height: 12px;
}

.collapse {
    margin-left: auto;
    padding-right: 8px;
}

.collapse svg {
    width: 16px;
    height: 10px;
}

/* Workspace */
.workspace {
    position: relative;
    flex: 1;
    min-height: 0;
    display: flex;
    flex-direction: column;
    padding: 5px 5px 6px;
}

.ribbon,
.middle,
.bottom {
    position: relative;
}

/* The model fills the area behind the panels */
.scene {
    position: absolute;
    inset: 0;
    width: 100%;
    height: 100%;
}

.edge {
    fill: none;
    stroke: #444;
    stroke-opacity: 0.36;
}

.edge.strong {
    stroke-opacity: 0.55;
}

.line {
    fill: none;
    stroke: #111;
}

.viewcube {
    position: absolute;
    top: 26px;
    right: 30px;
    width: 110px;
    height: 110px;
}

.face {
    font-size: 13px;
    font-weight: bold;
    text-anchor: middle;
    fill: #9b9ca0;
}

.axis {
    font-size: 15px;
    font-weight: bold;
    text-anchor: middle;
}

.axis.x {
    fill: #ff8b8b;
}

.axis.y {
    fill: #8bf58b;
}

/* Ribbon */
.ribbon {
    display: flex;
    align-self: flex-start;
    height: 75px;
    background: #dcdcdc;
}

.mode {
    gap: 8px;
    width: 134px;
    padding-left: 41px;
    background: #adadad;
    font-weight: bold;
    color: #fff;
}

.mode .caret {
    color: #fff;
}

.mode::before {
    content: "";
    width: 6px;
    height: 28px;
    margin-left: -34px;
    margin-right: 20px;
    border: solid #8c8c8c;
    border-width: 0 1px;
}

.group {
    display: flex;
    flex-direction: column;
    align-items: center;
    padding: 9px 10px 0 9px;
}

.group.narrow {
    padding: 9px 8px 0;
}

.group + .group {
    background: linear-gradient(#c4c4c4, #c4c4c4) 0 6px / 1px 63px no-repeat;
}

.tools {
    display: flex;
    gap: 14px;
}

.tools svg {
    width: 40px;
    height: 40px;
    overflow: visible;
}

.label {
    gap: 5px;
    margin-top: 7px;
    padding: 0 5px;
    font-size: 12px;
}

.sigma {
    font-family: "Liberation Serif", serif;
    font-size: 56px;
    font-weight: bold;
    fill: #000;
}

/* Panels */
.middle {
    display: flex;
    justify-content: space-between;
    align-items: flex-start;
    flex: 1;
    min-height: 0;
}

.browser {
    width: 375px;
    margin-top: 5px;
}

.panel {
    display: flex;
    align-items: center;
    width: 375px;
    height: 31px;
    padding: 0 2px 0 6px;
    background: #d1d1d1;
    border: 1px solid #aaa;
}

.rewind {
    width: 12px;
    height: 8px;
}

.panel h2 {
    flex: 1;
    margin-left: 15px;
}

.bottom .panel h2 {
    margin-left: 27px;
}

.grip {
    width: 4px;
    height: 14px;
    margin-left: 8px;
    border: solid #8c8c8c;
    border-width: 0 1px;
}

.tree {
    display: flex;
    flex-direction: column;
    gap: 5px;
    margin-top: 7px;
    padding-left: 44px;
    list-style: none;
}

.tree li {
    display: flex;
    align-items: center;
    height: 25px;
}

.tree .root {
    margin-left: -23px;
}

.toggle svg {
    width: 14px;
    height: 18px;
}

.toggle {
    width: 24px;
}

.chip {
    display: flex;
    align-items: center;
    height: 25px;
    padding: 0 14px 0 3px;
    background: #cbcbcb;
    white-space: nowrap;
}

.chip svg {
    width: 20px;
    height: 20px;
    margin-right: 17px;
}

.chip svg:first-child:not(:nth-last-child(1)) {
    margin-right: 12px;
}

.cog {
    color: #555;
}

.chip.selected {
    padding: 0 11px 0 2px;
    background: repeating-linear-gradient(120deg, #8fa9d6 0 3px, transparent 3px 8px) 30px 100% / 148px 4px no-repeat #7d7d7d;
    border: 1px solid #cbcbcb;
    font-size: 14px;
    font-weight: bold;
    color: #fff;
}

.activate {
    display: flex;
    align-items: center;
    height: 25px;
    padding: 0 10px 0 4px;
    background: #cbcbcb;
}

.activate input {
    appearance: none;
    width: 16px;
    height: 16px;
    border: 2px solid #222;
    border-radius: 50%;
    background: radial-gradient(#222 0 2px, #fff 3px);
}

/* Edit feature dialog */
.dialog {
    width: 312px;
    margin: 142px 37px 0 0;
    background: #ddd;
    border: 1px solid #aaa;
}

.dialog-head {
    display: flex;
    align-items: center;
    gap: 15px;
    height: 30px;
    padding-left: 6px;
    background: #d1d1d1;
    border-bottom: 1px solid #aaa;
}

.dialog-body {
    display: flex;
    flex-direction: column;
    gap: 4px;
    padding: 4px 16px 27px 12px;
}

.row {
    display: grid;
    grid-template-columns: 94px minmax(0, 1fr);
    align-items: center;
    height: 28px;
}

.dialog hr {
    height: 2px;
    margin: 7px 0 2px -10px;
    border: none;
    background: #c6c6c6;
}

.pick {
    display: flex;
    align-items: center;
    gap: 12px;
}

#profile {
    gap: 4px;
    width: 96px;
    height: 28px;
    padding-left: 6px;
    background: #5b8db7;
    color: #fff;
    white-space: nowrap;
}

#profile svg {
    width: 14px;
    height: 20px;
}

.clear {
    color: #555;
}

.select {
    display: grid;
    align-items: center;
}

.select > * {
    grid-area: 1 / 1;
}

select {
    appearance: none;
    width: 100%;
    height: 28px;
    padding-left: 26px;
    font: inherit;
    color: inherit;
    background: #c9c9c9;
    border: none;
    border-radius: 0;
}

.glyph {
    width: 20px;
    height: 20px;
    margin-left: 2px;
    pointer-events: none;
}

.select .caret {
    justify-self: end;
    margin-right: 6px;
    pointer-events: none;
}

.select .caret,
.field .caret,
.value .caret {
    height: 6px;
}

.field {
    display: flex;
    align-items: center;
    gap: 2px;
    min-width: 0;
    padding: 0 6px 0 2px;
}

input[type="text"] {
    flex: 1;
    width: 0;
    min-width: 0;
    height: 21px;
    padding: 0 4px;
    font: inherit;
    color: #4a4a4a;
    background: #fff;
    border: 1px solid #888;
    outline: none;
}

.dialog-foot {
    display: flex;
    justify-content: flex-end;
    align-items: center;
    gap: 12px;
    height: 45px;
    padding-right: 20px;
    background: #d1d1d1;
    border-top: 1px solid #aaa;
}

.dialog-foot button {
    justify-content: center;
    width: 75px;
    height: 23px;
    font-size: 15px;
    border: 1px solid #bbb;
    background: #eaeaea;
    color: #666;
}

.dialog-foot .ok {
    background: linear-gradient(#6094c8, #3a6ba0);
    border-color: #7f9dbb;
    color: #fff;
}

/* Value box */
.value-box {
    position: absolute;
    left: 1116px;
    top: 515px;
    display: flex;
    align-items: center;
    gap: 6px;
}

.dots {
    width: 6px;
    height: 26px;
    background: radial-gradient(#c6c6c6 1px, transparent 1px) 0 0 / 3px 3px;
}

.value {
    display: flex;
    align-items: center;
    gap: 5px;
    width: 113px;
    height: 28px;
    padding: 0 4px 0 13px;
    background: #cbcbcb;
}

.value input[type="text"] {
    height: 22px;
    padding: 0 2px;
    border: 2px solid #1d80d5;
}

/* Bottom row */
.bottom {
    display: grid;
    grid-template-columns: 1fr auto 1fr;
    align-items: center;
}

.view-tools {
    display: flex;
    gap: 8px;
}

.view-group {
    display: flex;
    align-items: center;
    gap: 12px;
    height: 30px;
    padding: 0 5px 0 4px;
    background: #c9c9c9;
}

.view-group button {
    gap: 6px;
}

.view-group .orbit {
    margin-right: -5px;
}

.view-group .caret {
    height: 6px;
}

.view-group.tight {
    gap: 9px;
    padding: 0 5px;
}

.view-group.tight button {
    gap: 2px;
}

.hint {
    padding-right: 161px;
    text-align: right;
    font-size: 14px;
    font-weight: bold;
    color: #3c3c3c;
}

/* Timeline */
.timeline {
    display: flex;
    align-items: center;
    height: 62px;
    padding-right: 11px;
    background: #cbcbcb;
    border-top: 1px solid #d6d6d6;
    border-bottom: 2px solid #1c1c1c;
}

.playback {
    display: flex;
    gap: 15px;
    padding: 0 24px 0 13px;
}

.playback svg {
    width: 16px;
    height: 18px;
}

.features {
    display: flex;
    align-self: flex-start;
    height: 53px;
    list-style: none;
    background: linear-gradient(#777, #777) center bottom / calc(100% - 28px) 2px no-repeat;
}

.features li {
    position: relative;
    width: 30px;
    padding: 21px 5px 0;
    background: linear-gradient(#777, #777) center bottom / 2px 7px no-repeat;
}

.features svg {
    width: 20px;
    height: 20px;
}

.features .current::before {
    content: "";
    position: absolute;
    inset: 16px 0 7px;
    background: #5b8db7;
    border-radius: 2px;
}

.features .current svg {
    position: relative;
}

.features .off svg {
    opacity: 0.3;
}

.features .marker {
    position: absolute;
    top: 14px;
    right: -8px;
    z-index: 1;
    width: 15px;
    height: 38px;
}

.settings {
    margin-left: auto;
    color: #666;
}
```
